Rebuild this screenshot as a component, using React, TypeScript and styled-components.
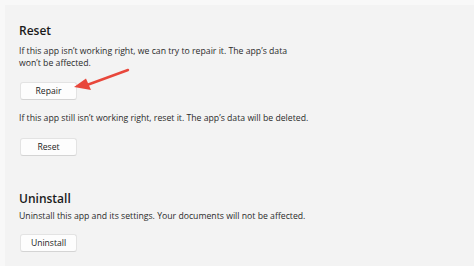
import styled, { createGlobalStyle } from "styled-components";

const GlobalStyle = createGlobalStyle`
    html, body {
        margin: 0;
        padding: 0;
        background-color: #f8f8f8;
    }
    body {
        font-family: "Open Sans", "Noto Sans", sans-serif;
        -webkit-font-smoothing: antialiased;
    }
`;

const Window = styled.div`
    width: 474px;
    height: 266px;
    overflow: hidden;
    padding: 5px 0 0 5px;
    box-sizing: border-box;
`;

const Panel = styled.div`
    background-color: #f3f3f3;
    height: 100%;
    padding: 18px 0 0 14px;
    box-sizing: border-box;
    display: flex;
    flex-direction: column;
`;

const Section = styled.section<{ gap: number; }>`
    display: flex;
    flex-direction: column;
    align-items: flex-start;
    margin-top: ${props => `${props.gap}px`};
`;

const Heading = styled.h2`
    margin: 0;
    font-size: 12px;
    line-height: 16px;
    font-weight: 600;
    color: #1a1a1a;
`;

const Text = styled.p<{ space: number; }>`
    margin: ${props => `${props.space}px`} 0 0;
    font-size: 8.7px;
    line-height: 12px;
    color: #2b2b2b;
    white-space: nowrap;
`;

const ButtonRow = styled.div<{ space: number; }>`
    position: relative;
    margin-top: ${props => `${props.space}px`};
`;

const Button = styled.button`
    width: 57px;
    height: 18px;
    padding: 0;
    margin-left: 1px;
    font-family: inherit;
    font-size: 8.6px;
    color: #1b1b1b;
    background-color: #fdfdfd;
    border: 1px solid #e3e3e3;
    border-bottom-color: #d4d4d4;
    border-radius: 3px;
    display: block;
`;

const Arrow = styled.svg`
    position: absolute;
    left: 50px;
    top: -16px;
    overflow: visible;
`;

const App = (): JSX.Element => {

    return <Window>
        <GlobalStyle />
        <Panel>
            <Section gap={0}>
                <Heading>Reset</Heading>
                <Text space={6}>
                    If this app isn’t working right, we can try to repair it. The app’s data<br />
                    won’t be affected.
                </Text>

                <ButtonRow space={13}>
                    <Button>Repair</Button>
                    <Arrow width="64" height="30" viewBox="0 0 64 30">
                        <line x1="59" y1="4" x2="18" y2="19" stroke="#e8473b" strokeWidth="2.4" strokeLinecap="round" />
                        <polygon points="5,21 17,12.5 22,24" fill="#e8473b" />
                    </Arrow>
                </ButtonRow>

                <Text space={12}>
                    If this app still isn’t working right, reset it. The app’s data will be deleted.
                </Text>

                <ButtonRow space={14}>
                    <Button>Reset</Button>
                </ButtonRow>
            </Section>

            <Section gap={35}>
                <Heading>Uninstall</Heading>
                <Text space={3}>
                    Uninstall this app and its settings. Your documents will not be affected.
                </Text>

                <ButtonRow space={12}>
                    <Button>Uninstall</Button>
                </ButtonRow>
            </Section>
        </Panel>
    </Window>;
}

export default App;
